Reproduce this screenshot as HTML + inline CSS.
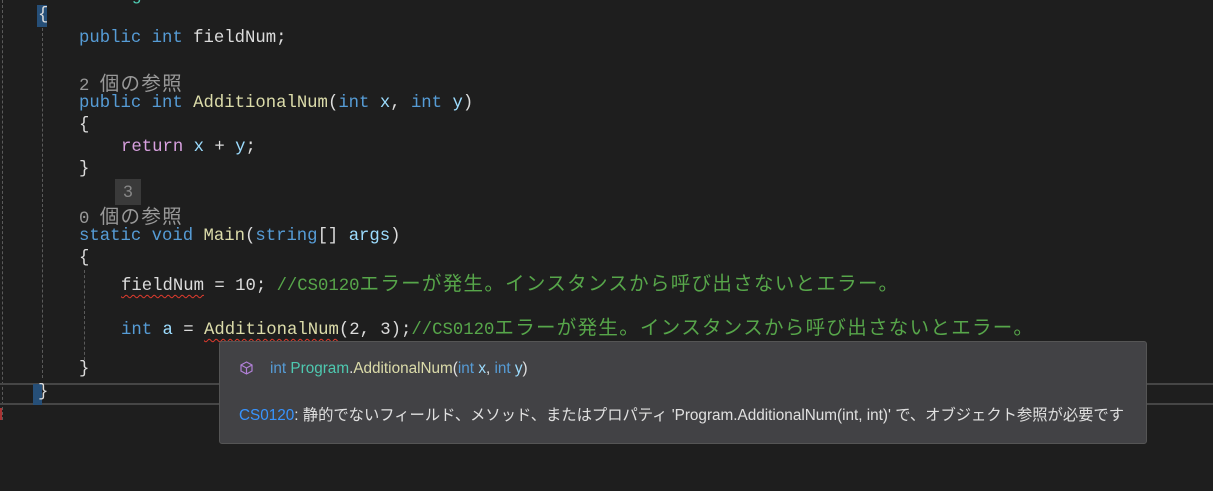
<!DOCTYPE html>
<html><head><meta charset="utf-8"><style>
body{margin:0;width:1213px;height:491px;background:#1e1e1e;overflow:hidden;position:relative;font-family:"Liberation Mono","Noto Sans CJK JP",monospace;font-size:17.3px;color:#dcdcdc}
.l{position:absolute;white-space:pre;height:22px;line-height:22px}
.j{font-family:"Noto Sans CJK JP",sans-serif;font-size:19.5px;letter-spacing:1.3px;line-height:22px}
.k{color:#569cd6}.m{color:#dcdcaa}.c{color:#57a64a}.r{color:#d8a0df}.p{color:#9cdcfe}.g{color:#999}.t{color:#4ec9b0}
.sq{text-decoration:underline wavy #e03b2e;text-decoration-thickness:1px;text-underline-offset:4px}
.dash{position:absolute;width:0;border-left:1px dashed #5a5a5a}
.tip{position:absolute;left:219px;top:341px;width:926px;height:101px;background:#424245;border:1px solid #555;border-radius:3px;font-family:"Liberation Sans","Noto Sans CJK JP",sans-serif;font-size:15.3px;color:#e0e0e0}
</style></head><body>
<div class="dash" style="left:2px;top:0;height:420px"></div>
<div class="dash" style="left:42px;top:28px;height:350px"></div>
<div class="dash" style="left:84px;top:160px;height:10px"></div>
<div class="dash" style="left:84px;top:270px;height:90px"></div>
<div style="position:absolute;left:0;top:383px;width:1213px;height:2px;background:#464646"></div>
<div style="position:absolute;left:0;top:403px;width:1213px;height:2px;background:#464646"></div>
<div style="position:absolute;left:0;top:408px;width:2px;height:12px;background:#a33"></div>
<div style="position:absolute;left:37px;top:5px;width:10px;height:22px;background:#264f78"></div>
<div style="position:absolute;left:33px;top:384px;width:9px;height:21px;background:#264f78"></div>
<div class="l" style="left:38px;top:-14px"><span class="k">class</span> <span class="t">Program</span></div>
<div class="l" style="left:38px;top:5px">{</div>
<div class="l" style="left:79px;top:28px"><span class="k">public</span> <span class="k">int</span> fieldNum;</div>
<div class="l g" style="left:79px;top:71px">2 <span class="j">個の参照</span></div>
<div class="l" style="left:79px;top:93px"><span class="k">public</span> <span class="k">int</span> <span class="m">AdditionalNum</span>(<span class="k">int</span> <span class="p">x</span>, <span class="k">int</span> <span class="p">y</span>)</div>
<div class="l" style="left:79px;top:115px">{</div>
<div class="l" style="left:121px;top:137px"><span class="r">return</span> <span class="p">x</span> + <span class="p">y</span>;</div>
<div class="l" style="left:79px;top:159px">}</div>
<div style="position:absolute;left:115px;top:179px;width:26px;height:26px;background:#3a3a3a;color:#888;font-size:17px;text-align:center;line-height:26px;font-family:'Liberation Sans',sans-serif">3</div>
<div class="l g" style="left:79px;top:204px">0 <span class="j">個の参照</span></div>
<div class="l" style="left:79px;top:226px"><span class="k">static</span> <span class="k">void</span> <span class="m">Main</span>(<span class="k">string</span>[] <span class="p">args</span>)</div>
<div class="l" style="left:79px;top:248px">{</div>
<div class="l" style="left:121px;top:271px"><span class="sq">fieldNum</span> = 10; <span class="c">//CS0120<span class="j">エラーが発生。インスタンスから呼び出さないとエラー。</span></span></div>
<div class="l" style="left:121px;top:315px"><span class="k">int</span> <span class="p">a</span> = <span class="m sq">AdditionalNum</span>(2, 3);<span class="c">//CS0120<span class="j">エラーが発生。インスタンスから呼び出さないとエラー。</span></span></div>
<div class="l" style="left:79px;top:359px">}</div>
<div class="l" style="left:38px;top:382px">}</div>
<div class="tip">
<svg style="position:absolute;left:20px;top:19px" width="13" height="14" viewBox="0 0 13 14"><path d="M6.5 1 L12 4 V10 L6.5 13 L1 10 V4 Z M1 4 L6.5 7 L12 4 M6.5 7 V13" fill="none" stroke="#b180d7" stroke-width="1.2"/></svg>
<div style="position:absolute;left:50px;top:18px;white-space:nowrap"><span style="color:#569cd6">int</span> <span style="color:#4ec9b0">Program</span>.<span style="color:#dcdcaa">AdditionalNum</span>(<span style="color:#569cd6">int</span> <span style="color:#9cdcfe">x</span>, <span style="color:#569cd6">int</span> <span style="color:#9cdcfe">y</span>)</div>
<div style="position:absolute;left:19px;top:61px;white-space:nowrap"><span style="color:#3794ff">CS0120</span>: 静的でないフィールド、メソッド、またはプロパティ 'Program.AdditionalNum(int, int)' で、オブジェクト参照が必要です</div>
</div>
</body></html>
